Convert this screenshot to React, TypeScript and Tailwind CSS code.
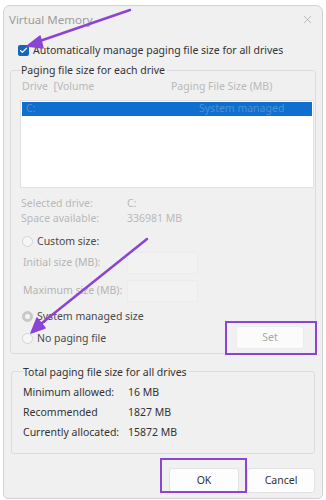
import { X, Check } from 'lucide-react';

function Radio({ label, checked, h = 'h-[22px]' }: { label: string; checked?: boolean; h?: string }) {
  return (
    <div className={'flex items-center pl-[12px] ' + h}>
      <span
        className={
          'w-[11px] h-[11px] rounded-full border flex items-center justify-center ' +
          (checked ? 'border-[#c8c8c8] bg-[#c8c8c8]' : 'border-[#d4d4d4] bg-[#f6f6f6]')
        }
      >
        {checked && <span className="w-[5px] h-[5px] rounded-full bg-[#f4f4f4]" />}
      </span>
      <span className="ml-[4px] text-[#4a4a4a] whitespace-nowrap">{label}</span>
    </div>
  );
}

function SizeRow({ label }: { label: string }) {
  return (
    <div className="flex items-center h-[24px] pl-[13px]">
      <span className="w-[104px] text-[#b4b4b4] whitespace-nowrap">{label}</span>
      <span className="w-[71px] h-[22px] border border-[#ececec] bg-[#f2f2f2]" />
    </div>
  );
}

export default function App() {
  return (
    <div
      className="relative w-[326px] h-[500px] overflow-hidden bg-white text-[10.5px] leading-none"
      style={{ fontFamily: '"Noto Sans", "Open Sans", sans-serif' }}
    >
      <div className="h-[5px]" />

      <div className="ml-[3px] w-[320px] h-[494px] bg-[#f0f0f0] border border-[#d2d2d2] rounded-t-[7px] rounded-b-[5px] flex flex-col">
        <div className="h-[27px] flex items-center justify-between pl-[5px] pr-[8px]">
          <span className="text-[11.5px] text-[#9c9c9c]">Virtual Memory</span>
          <X className="w-[13px] h-[13px] text-[#a4a4a4]" strokeWidth={1.3} />
        </div>

        <div className="flex items-center mt-[12px] pl-[14px]">
          <span className="w-[11px] h-[11px] rounded-[2px] bg-[#1565c0] flex items-center justify-center">
            <Check className="w-[9px] h-[9px] text-white" strokeWidth={3} />
          </span>
          <span className="ml-[4px] text-[#333]">Automatically manage paging file size for all drives</span>
        </div>

        <fieldset className="mx-[6px] mt-[9px] border border-[#dcdcdc] rounded-[3px] pl-[9px] pr-[1px] pb-[3px]">
          <legend className="ml-[1px] pr-[2px] text-[#333] -mb-[2px]">Paging file size for each drive</legend>
          <div className="flex h-[18px] items-center text-[#b9b9b9] mt-[4px] pl-[2px]">
            <span className="w-[149px]">Drive&nbsp; [Volume</span>
            <span>Paging File Size (MB)</span>
          </div>
          <div className="mt-[4px] h-[88px] bg-white border border-[#e2e2e2] p-px">
            <div className="h-[14px] bg-[#0e6fcf] flex items-center text-[#4f8fd3] pl-[4px]">
              <span className="w-[173px]">C:</span>
              <span>System managed</span>
            </div>
          </div>

          <div className="mt-[8px] text-[#b9b9b9] leading-[15px] pl-[1px]">
            <div className="flex">
              <span className="w-[106px]">Selected drive:</span>
              <span>C:</span>
            </div>
            <div className="flex">
              <span className="w-[106px]">Space available:</span>
              <span>336981 MB</span>
            </div>
          </div>

          <div className="mt-[7px] -ml-[10px]">
            <Radio label="Custom size:" h="h-[18px]" />
            <SizeRow label="Initial size (MB):" />
            <div className="h-[4px]" />
            <SizeRow label="Maximum size (MB):" />
            <div className="flex items-end justify-between pr-[10px] mt-[3px]">
              <div>
                <Radio label="System managed size" checked />
                <Radio label="No paging file" />
              </div>
              <button className="w-[68px] h-[23px] bg-[#fbfbfb] border border-[#ececec] rounded-[3px] text-[#a8a8a8] mb-px">
                Set
              </button>
            </div>
          </div>
        </fieldset>

        <fieldset className="mx-[7px] mt-[13px] border border-[#dcdcdc] rounded-[3px] pl-[11px] pb-[11px] pr-[1px]">
          <legend className="pr-[2px] text-[#333] -mb-[2px]">Total paging file size for all drives</legend>
          <div className="text-[#333] leading-[20px] mt-[7px]">
            <div className="flex">
              <span className="w-[105px]">Minimum allowed:</span>
              <span>16 MB</span>
            </div>
            <div className="flex">
              <span className="w-[105px]">Recommended</span>
              <span>1827 MB</span>
            </div>
            <div className="flex">
              <span className="w-[105px]">Currently allocated:</span>
              <span>15872 MB</span>
            </div>
          </div>
        </fieldset>

        <div className="flex justify-end gap-[8px] mt-[14px] pr-[7px]">
          <button className="w-[70px] h-[25px] bg-[#fdfdfd] border border-[#e2e2e2] rounded-[3px] text-[#333]">OK</button>
          <button className="w-[68px] h-[25px] bg-[#fdfdfd] border border-[#e2e2e2] rounded-[3px] text-[#333]">Cancel</button>
        </div>
      </div>

      {/* annotation overlays */}
      <div className="absolute left-[225px] top-[321px] w-[92px] h-[34px] border-[2.5px] border-[#8b44d4]" />
      <div className="absolute left-[160px] top-[458px] w-[87px] h-[35px] border-[2.5px] border-[#8b44d4]" />
      <svg className="absolute left-0 top-0" width="326" height="500" viewBox="0 0 326 500">
        <g stroke="#8b44d4" strokeWidth="2.5" strokeLinecap="round" fill="#8b44d4">
          <line x1="130" y1="10" x2="34" y2="43" />
          <polygon points="27,46 40,36 43,48" strokeWidth="1.5" strokeLinejoin="round" />
          <line x1="147" y1="239" x2="37" y2="327" />
          <polygon points="31,333 37,318 45,328" strokeWidth="1.5" strokeLinejoin="round" />
        </g>
      </svg>
    </div>
  );
}
